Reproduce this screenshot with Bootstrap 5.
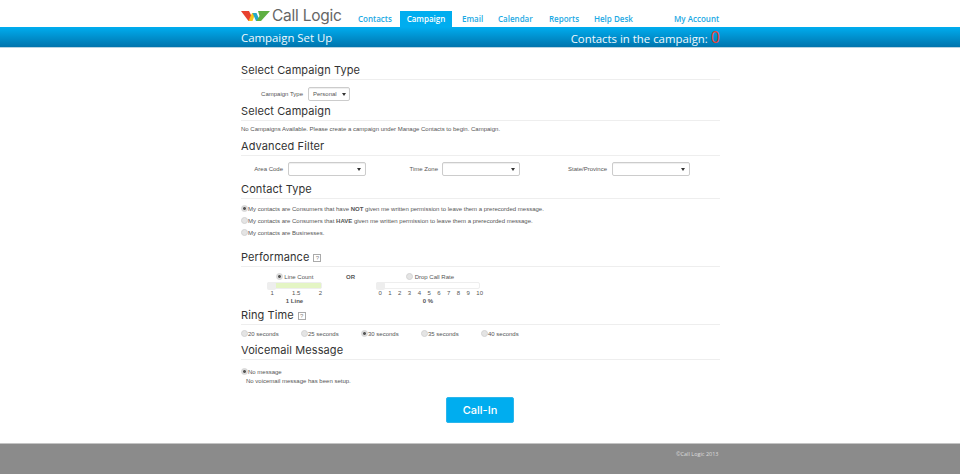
<!DOCTYPE html>
<html lang="en">
<head>
<meta charset="utf-8">
<title>Campaign Set Up</title>
<link href="https://cdn.jsdelivr.net/npm/bootstrap@5.3.0/dist/css/bootstrap.min.css" rel="stylesheet">
<style>
html,body{height:474px;overflow:hidden}
body{font-family:"Liberation Sans",Arial,sans-serif;font-size:6px;line-height:9px;color:#555;background:#fff}
.pagewrap{width:479px;margin-left:241px}
.hdr{height:27px}
.logo-name{font-family:Inter,"Open Sans",sans-serif;font-size:15.5px;line-height:20px;color:#666;letter-spacing:-.25px;white-space:nowrap;margin-left:2px}
.logo-box{width:100px;flex:none;padding-top:5px}
.menu{margin-left:17px;width:362px;padding-top:11px}
.menu a{font-family:"Open Sans",sans-serif;font-weight:600;font-size:8px;line-height:16px;color:#1ca9e3;text-decoration:none;height:16px;display:block;white-space:nowrap}
.menu a.on{background:#00adef;color:#fff;text-align:center}
.m1{width:42px}.m2{width:52px}.m3{margin-left:10px;width:36px}.m4{width:51px}.m5{width:45px}.m6{width:80px}
.bluebar{height:21px;background:linear-gradient(#00adef,#0074ad);border-bottom:1px solid #b7d3e2;color:#f0f9fd;font-family:"Open Sans",sans-serif;font-size:11.4px;line-height:21px}
.bluebar .cnt{color:#f04030;font-size:16px;line-height:20px;margin-left:3px}
.sect{font-family:Inter,"Open Sans",sans-serif;font-size:11px;line-height:15px;color:#333;border-bottom:1px solid #eee;padding-bottom:1px;font-weight:400;margin:0;letter-spacing:.1px}
.fake-sel{display:flex;align-items:center;justify-content:space-between;height:14px;border:1px solid #ccc;border-radius:2px;background:#fff;padding:0 4px;box-shadow:inset 0 1px 1px #eee;color:#555}
.fake-sel::after{content:"";margin-left:auto;border-left:2px solid transparent;border-right:2px solid transparent;border-top:3px solid #333}
.radio{width:7px;height:7px;border-radius:50%;background:#e4e4e4;border:1px solid #d4d4d4;display:inline-block;flex:none;vertical-align:-1px}
.radio.chk{background:radial-gradient(#555 35%,#ddd 45%)}
.lbl-type{width:62px;text-align:right;margin-right:5px}
.help{display:inline-block;width:8px;height:8px;border:1px solid #aaa;font-size:6px;line-height:6px;text-align:center;color:#888;margin-left:4px;vertical-align:1px;font-family:"Liberation Sans",sans-serif}
.tick-row{display:flex;justify-content:space-between;height:8px}
.track{height:7px;border:1px solid #eee;border-radius:2px;position:relative}
.thumb{position:absolute;left:-1px;top:-1px;width:9px;height:8px;background:#eee;border-radius:2px}
.green{background:#e4f5c4}
.callbtn{width:68px;height:26px;background:#00adef;border:1px solid #2bb6ec;color:#fff;font-family:Inter,"Open Sans",sans-serif;font-weight:500;font-size:11px;border-radius:2px;padding:0}
.foot{height:31px;background:#8b8b8b;border-top:1px solid #c4c4c4;color:#ddd;font-family:"Open Sans",sans-serif;font-size:5.5px;line-height:21px}
.foot .pagewrap{padding-left:435px;white-space:nowrap}
.s1{padding-top:15px}
.sel-row1{height:24px;padding-top:4px}
.sel-p{width:42px;padding:0 3px 0 4px}
.nocamp{padding-top:4px;height:18px}
.filt{height:26px}
.f1{width:42px;text-align:right;margin-right:5px}
.w78{width:78px}
.f2{width:72px;text-align:right;margin-right:4px}
.f3{width:87px;text-align:right;margin-right:5px}
.opts{padding-top:6px;height:51px}
.opt{height:12px}
.sliders{height:41px;padding-top:6px}
.lc{width:55px;margin-left:26px}
.tk1{padding:0 0 0 3.5px}
.orw{margin-left:24px;width:30px}
.dc{width:104px}
.dc .sl-h{padding-left:4px}
.dc .tick-row{margin:0 -3px 0 2.5px}
.sl-h{height:9px}
.rings{padding-top:5px;height:18px}
.rg{width:60px}
.vmb{padding-top:8px;height:37px}
.vmn{padding-left:5px}
.btnw{height:46px}
.btnw .btn{margin-left:-1px}
</style>
</head>
<body>
<div class="pagewrap hdr d-flex">
  <div class="logo-box d-flex align-items-center">
    <svg class="flex-shrink-0" width="29" height="12" viewBox="0 0 29 12">
      <path d="M0 1H8L11 7 8.500 11H7.500z" fill="#e8412f"/>
      <path d="M7.500 11 11 3H14.500L11.500 11z" fill="#f7c41a"/>
      <path d="M11.500 3H15.500L19 11H15z" fill="#23a9c9"/>
      <path d="M17 1H29L20 11H15.500L18.500 6z" fill="#5fb042"/>
    </svg>
    <span class="logo-name">Call Logic</span>
  </div>
  <nav class="menu d-flex">
    <a class="m1" href="#">Contacts</a>
    <a class="m2 on" href="#">Campaign</a>
    <a class="m3" href="#">Email</a>
    <a class="m4" href="#">Calendar</a>
    <a class="m5" href="#">Reports</a>
    <a class="m6" href="#">Help Desk</a>
    <a href="#">My Account</a>
  </nav>
</div>
<div class="bluebar">
  <div class="pagewrap d-flex justify-content-between">
    <span>Campaign Set Up</span>
    <span>Contacts in the campaign:<span class="cnt">0</span></span>
  </div>
</div>
<main class="pagewrap s1">
  <h2 class="sect">Select Campaign Type</h2>
  <div class="d-flex align-items-center sel-row1">
    <span class="lbl-type">Campaign Type</span>
    <span class="fake-sel sel-p">Personal</span>
  </div>
  <h2 class="sect">Select Campaign</h2>
  <p class="m-0 nocamp">No Campaigns Available. Please create a campaign under Manage Contacts to begin. Campaign.</p>
  <h2 class="sect">Advanced Filter</h2>
  <div class="d-flex align-items-center filt">
    <span class="f1">Area Code</span><span class="fake-sel w78"></span>
    <span class="f2">Time Zone</span><span class="fake-sel w78"></span>
    <span class="f3">State/Province</span><span class="fake-sel w78"></span>
  </div>
  <h2 class="sect">Contact Type</h2>
  <div class="opts">
    <div class="opt"><span class="radio chk"></span>My contacts are Consumers that have <b>NOT</b> given me written permission to leave them a prerecorded message.</div>
    <div class="opt"><span class="radio"></span>My contacts are Consumers that <b>HAVE</b> given me written permission to leave them a prerecorded message.</div>
    <div class="opt"><span class="radio"></span>My contacts are Businesses.</div>
  </div>
  <h2 class="sect">Performance<span class="help">?</span></h2>
  <div class="d-flex sliders">
    <div class="lc text-center">
      <div class="sl-h"><span class="radio chk"></span> Line Count</div>
      <div class="track green"><span class="thumb"></span></div>
      <div class="tick-row tk1"><span>1</span><span>1.5</span><span>2</span></div>
      <div><b>1 Line</b></div>
    </div>
    <div class="orw"><b>OR</b></div>
    <div class="dc text-center">
      <div class="sl-h"><span class="radio"></span> Drop Call Rate</div>
      <div class="track"><span class="thumb"></span></div>
      <div class="tick-row"><span>0</span><span>1</span><span>2</span><span>3</span><span>4</span><span>5</span><span>6</span><span>7</span><span>8</span><span>9</span><span>10</span></div>
      <div><b>0 %</b></div>
    </div>
  </div>
  <h2 class="sect">Ring Time<span class="help">?</span></h2>
  <div class="d-flex rings">
    <div class="rg"><span class="radio"></span>20 seconds</div>
    <div class="rg"><span class="radio"></span>25 seconds</div>
    <div class="rg"><span class="radio chk"></span>30 seconds</div>
    <div class="rg"><span class="radio"></span>35 seconds</div>
    <div class="rg"><span class="radio"></span>40 seconds</div>
  </div>
  <h2 class="sect">Voicemail Message</h2>
  <div class="vmb">
    <div><span class="radio chk"></span>No message</div>
    <div class="vmn">No voicemail message has been setup.</div>
  </div>
  <div class="text-center btnw"><button type="button" class="btn callbtn">Call-In</button></div>
</main>
<footer class="foot"><div class="pagewrap">©Call Logic 2013</div></footer>
</body>
</html>
